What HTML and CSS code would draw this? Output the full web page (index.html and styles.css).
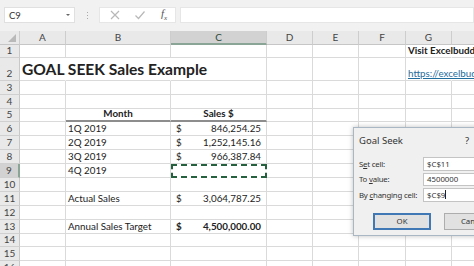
FILE: index.html
```html
<!DOCTYPE html>
<html>
<head>
<meta charset="utf-8">
<link rel="stylesheet" href="styles.css">
</head>
<body>
<div class="app">
  <div class="fbar">
    <div class="namebox"><span>C9</span><span class="dd"></span></div>
    <div class="grip"><i></i><i></i><i></i></div>
    <div class="fbtns">
      <svg class="ic" width="12" height="12" viewBox="0 0 12 12"><path d="M2 2 L10 10 M10 2 L2 10" stroke="#b8b8b8" stroke-width="1.2" fill="none"/></svg>
      <svg class="ic" width="12" height="12" viewBox="0 0 12 12"><path d="M1.5 6.5 L4.5 9.5 L10.5 2.5" stroke="#b8b8b8" stroke-width="1.2" fill="none"/></svg>
      <span class="fx">f<sub>x</sub></span>
    </div>
    <div class="finput"></div>
  </div>
  <div class="sheet">
    <div class="row hdr">
      <div class="c c0 corner"><span class="tri"></span></div>
      <div class="c ca">A</div><div class="c cb">B</div><div class="c cc sel">C</div><div class="c cd">D</div><div class="c ce">E</div><div class="c cf">F</div><div class="c cg">G</div><div class="c ch">H</div>
    </div>
    <div class="row">
      <div class="c c0">1</div><div class="c ca"></div><div class="c cb"></div><div class="c cc"></div><div class="c cd"></div><div class="c ce"></div><div class="c cf"></div><div class="c cg nb"><span class="bold ov">Visit Excelbuddy.com</span></div><div class="c ch"></div>
    </div>
    <div class="row tall">
      <div class="c c0">2</div><div class="c ca nb"><span class="title ov">GOAL SEEK Sales Example</span></div><div class="c cb nb"></div><div class="c cc"></div><div class="c cd"></div><div class="c ce"></div><div class="c cf"></div><div class="c cg nb"><span class="link ov">https://excelbuddy.com</span></div><div class="c ch"></div>
    </div>
    <div class="row">
      <div class="c c0">3</div><div class="c ca"></div><div class="c cb"></div><div class="c cc"></div><div class="c cd"></div><div class="c ce"></div><div class="c cf"></div><div class="c cg"></div><div class="c ch"></div>
    </div>
    <div class="row">
      <div class="c c0">4</div><div class="c ca"></div><div class="c cb"></div><div class="c cc"></div><div class="c cd"></div><div class="c ce"></div><div class="c cf"></div><div class="c cg"></div><div class="c ch"></div>
    </div>
    <div class="row">
      <div class="c c0">5</div><div class="c ca"></div><div class="c cb thick ctr bold">Month</div><div class="c cc thick ctr bold">Sales $</div><div class="c cd"></div><div class="c ce"></div><div class="c cf"></div><div class="c cg"></div><div class="c ch"></div>
    </div>
    <div class="row">
      <div class="c c0">6</div><div class="c ca"></div><div class="c cb">1Q 2019</div><div class="c cc acc"><span>$</span><span>846,254.25</span></div><div class="c cd"></div><div class="c ce"></div><div class="c cf"></div><div class="c cg"></div><div class="c ch"></div>
    </div>
    <div class="row">
      <div class="c c0">7</div><div class="c ca"></div><div class="c cb">2Q 2019</div><div class="c cc acc"><span>$</span><span>1,252,145.16</span></div><div class="c cd"></div><div class="c ce"></div><div class="c cf"></div><div class="c cg"></div><div class="c ch"></div>
    </div>
    <div class="row">
      <div class="c c0">8</div><div class="c ca"></div><div class="c cb">3Q 2019</div><div class="c cc acc"><span>$</span><span>966,387.84</span></div><div class="c cd"></div><div class="c ce"></div><div class="c cf"></div><div class="c cg"></div><div class="c ch"></div>
    </div>
    <div class="row">
      <div class="c c0 rsel">9</div><div class="c ca"></div><div class="c cb">4Q 2019</div><div class="c cc ants"></div><div class="c cd"></div><div class="c ce"></div><div class="c cf"></div><div class="c cg"></div><div class="c ch"></div>
    </div>
    <div class="row">
      <div class="c c0">10</div><div class="c ca"></div><div class="c cb"></div><div class="c cc"></div><div class="c cd"></div><div class="c ce"></div><div class="c cf"></div><div class="c cg"></div><div class="c ch"></div>
    </div>
    <div class="row">
      <div class="c c0">11</div><div class="c ca"></div><div class="c cb">Actual Sales</div><div class="c cc acc"><span>$</span><span>3,064,787.25</span></div><div class="c cd"></div><div class="c ce"></div><div class="c cf"></div><div class="c cg"></div><div class="c ch"></div>
    </div>
    <div class="row">
      <div class="c c0">12</div><div class="c ca"></div><div class="c cb"></div><div class="c cc"></div><div class="c cd"></div><div class="c ce"></div><div class="c cf"></div><div class="c cg"></div><div class="c ch"></div>
    </div>
    <div class="row">
      <div class="c c0">13</div><div class="c ca"></div><div class="c cb">Annual Sales Target</div><div class="c cc acc bold"><span>$</span><span>4,500,000.00</span></div><div class="c cd"></div><div class="c ce"></div><div class="c cf"></div><div class="c cg"></div><div class="c ch"></div>
    </div>
    <div class="row">
      <div class="c c0">14</div><div class="c ca"></div><div class="c cb"></div><div class="c cc"></div><div class="c cd"></div><div class="c ce"></div><div class="c cf"></div><div class="c cg"></div><div class="c ch"></div>
    </div>
    <div class="row">
      <div class="c c0">15</div><div class="c ca"></div><div class="c cb"></div><div class="c cc"></div><div class="c cd"></div><div class="c ce"></div><div class="c cf"></div><div class="c cg"></div><div class="c ch"></div>
    </div>
    <div class="row">
      <div class="c c0">16</div><div class="c ca"></div><div class="c cb"></div><div class="c cc"></div><div class="c cd"></div><div class="c ce"></div><div class="c cf"></div><div class="c cg"></div><div class="c ch"></div>
    </div>
  </div>

  <div class="dialog">
    <div class="dtitle"><span>Goal Seek</span><span class="q">?</span></div>
    <div class="field"><label>S<u>e</u>t cell:</label><div class="inp">$C$11</div></div>
    <div class="field"><label>To <u>v</u>alue:</label><div class="inp">4500000</div></div>
    <div class="field"><label>By <u>c</u>hanging cell:</label><div class="inp">$C$9<span class="caret"></span></div></div>
    <div class="btns"><div class="btn ok">OK</div><div class="btn">Cancel</div></div>
  </div>
</div>
</body>
</html>
```
FILE: styles.css
```css
* { box-sizing: border-box; margin: 0; padding: 0; }
html, body { width: 474px; height: 266px; overflow: hidden; background: #fff; }
body { font-family: Lato, "Liberation Sans", sans-serif; color: #222; }
.app { position: relative; width: 474px; height: 266px; overflow: hidden; }

.fbar { height: 31px; background: #f1f1f1; display: flex; align-items: flex-start; padding-top: 7px; padding-left: 4px; }
.namebox { width: 71px; height: 16px; background: #fff; border: 1px solid #e0e0e0; display: flex; align-items: center; justify-content: space-between; padding: 0 4px 0 4px; font-size: 9.5px; color: #333; }
.dd { width: 0; height: 0; border-left: 2px solid transparent; border-right: 2px solid transparent; border-top: 2px solid #666; }
.grip { width: 24px; height: 16px; display: flex; flex-direction: column; align-items: center; justify-content: center; gap: 2px; }
.grip i { width: 1px; height: 1px; background: #aaa; display: block; }
.fbtns { width: 77px; height: 16px; background: #fff; border: 1px solid #e6e6e6; display: flex; align-items: center; padding-left: 9px; gap: 13px; }
.fx { font-family: "Liberation Serif", serif; font-style: italic; font-size: 11px; color: #555; margin-left: 2px; }
.fx sub { font-size: 7px; }
.finput { flex: 1; height: 16px; background: #fff; border: 1px solid #e6e6e6; margin-left: 4px; }

.sheet { display: flex; flex-direction: column; }
.row { display: flex; height: 13.9px; }
.row.hdr { height: 13.5px; }
.row.tall { height: 22.4px; }
.c { height: 100%; border-right: 1px solid #dadada; border-bottom: 1px solid #dadada; font-size: 9.8px; display: flex; align-items: flex-end; padding: 0 2px 1px 2px; white-space: nowrap; line-height: 12px; }
.c0 { width: 20px; flex: none; background: #e9e9e9; color: #444; justify-content: center; border-right: 1px solid #c8c8c8; border-bottom: 1px solid #d0d0d0; font-size: 10px; }
.ca { width: 46px; flex: none; }
.cb { width: 105px; flex: none; }
.cc { width: 96px; flex: none; }
.cd { width: 46px; flex: none; }
.ce { width: 46px; flex: none; }
.cf { width: 47px; flex: none; }
.cg { width: 46px; flex: none; }
.ch { width: 60px; flex: none; }
.hdr .c { background: #e9e9e9; color: #444; justify-content: center; align-items: center; font-size: 10px; border-right: 1px solid #cdcdcd; border-bottom: 1px solid #c6c6c6; padding: 0; }
.hdr .c.sel { background: #d2d2d2; border-bottom: 2px solid #8aa595; color: #2f4a3a; }
.corner { position: relative; }
.tri { position: absolute; right: 3px; bottom: 2px; width: 0; height: 0; border-left: 8px solid transparent; border-bottom: 8px solid #b9b9b9; }
.c0.rsel { background: #d2d2d2; border-right: 2px solid #8aa595; }
.nb { border-right-color: transparent; overflow: visible; }
.ov { position: relative; z-index: 1; }
.bold { font-weight: 700; }
.title { font-weight: 700; font-size: 15.6px; line-height: 20px; }
.link { color: #1f6c9e; text-decoration: underline; }
.ctr { justify-content: center; }
.thick { border-bottom: 2px solid #8d8d8d; }
.acc { justify-content: space-between; padding-left: 5px; padding-right: 5px; }
.ants { border: 2px dashed #25603f; }

.dialog { position: absolute; left: 353px; top: 127px; width: 150px; height: 109px; background: #f0f0f0; border: 1px solid #a9b6c4; box-shadow: 0 0 5px rgba(0,0,0,0.25); font-family: "Noto Sans", "Open Sans", sans-serif; font-size: 7.8px; color: #333; padding: 4px 0 0 5px; }
.dtitle { display: flex; justify-content: space-between; width: 110px; font-size: 9.5px; height: 16px; align-items: center; margin-bottom: 8px; }
.q { font-size: 9.5px; }
.field { display: flex; align-items: center; height: 15.5px; }
.field label { width: 64px; white-space: nowrap; letter-spacing: -0.2px; }
.inp { flex: 1; height: 13.5px; background: #fff; border: 1px solid #c4c4c4; display: flex; align-items: center; padding-left: 3px; font-size: 7.8px; }
.caret { display: inline-block; width: 1px; height: 9px; background: #222; }
.btns { display: flex; gap: 13px; margin-top: 10px; padding-left: 14px; }
.btn { width: 60px; height: 17px; background: #e1e1e1; border: 1px solid #adadad; display: flex; align-items: center; justify-content: center; font-size: 7.8px; }
.btn.ok { border: 2px solid #3f78b5; }
```
